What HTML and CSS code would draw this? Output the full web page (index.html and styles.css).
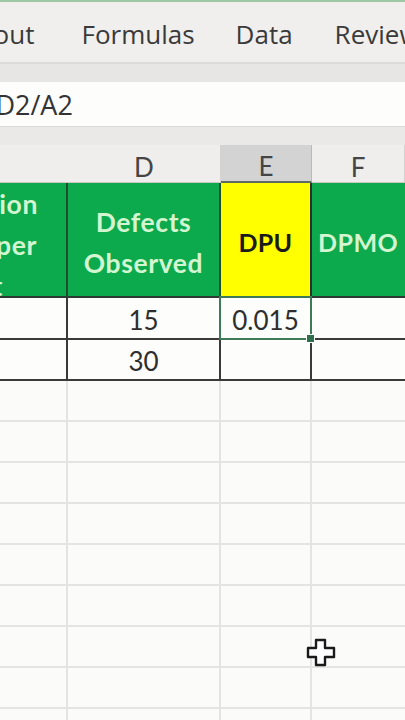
FILE: index.html
```html
<!DOCTYPE html>
<html>
<head>
<meta charset="utf-8">
<link rel="stylesheet" href="styles.css">
</head>
<body>
<div class="app">
  <div class="ribbon">
    <span class="tab tab-cut">Page Layout</span>
    <span class="tab tab-formulas">Formulas</span>
    <span class="tab">Data</span>
    <span class="tab">Review</span>
  </div>
  <div class="band"></div>
  <div class="fbar"><span class="formula">=D2/A2</span></div>
  <div class="band2"></div>
  <div class="sheet">
    <div class="ch ch-c"><span>C</span></div>
    <div class="ch">D</div>
    <div class="ch ch-sel">E</div>
    <div class="ch">F</div>

    <div class="hd hd-c">
      <span class="ln ln1">Inspection</span>
      <span class="ln ln2">Opportunities per</span>
      <span class="ln ln3">Unit</span>
    </div>
    <div class="hd"><span>Defects<br>Observed</span></div>
    <div class="hd hd-yellow">DPU</div>
    <div class="hd hd-f">DPMO</div>

    <div class="dc dc-c"></div>
    <div class="dc">15</div>
    <div class="dc dc-sel">0.015<span class="selbox"></span><span class="handle"></span></div>
    <div class="dc dc-f"></div>

    <div class="dc dc-c"></div>
    <div class="dc">30</div>
    <div class="dc"></div>
    <div class="dc dc-f"></div>

    <div class="ec"></div><div class="ec"></div><div class="ec"></div><div class="ec ec-f"></div>
    <div class="ec"></div><div class="ec"></div><div class="ec"></div><div class="ec ec-f"></div>
    <div class="ec"></div><div class="ec"></div><div class="ec"></div><div class="ec ec-f"></div>
    <div class="ec"></div><div class="ec"></div><div class="ec"></div><div class="ec ec-f"></div>
    <div class="ec"></div><div class="ec"></div><div class="ec"></div><div class="ec ec-f"></div>
    <div class="ec"></div><div class="ec"></div><div class="ec"></div><div class="ec ec-f"></div>
    <div class="ec"></div><div class="ec"></div><div class="ec"></div><div class="ec ec-f"></div>
    <div class="ec"></div><div class="ec"></div><div class="ec"></div><div class="ec ec-f"></div>
    <div class="ec"></div><div class="ec"></div><div class="ec"></div><div class="ec ec-f"></div>
  </div>
  <svg class="cursor" width="32" height="30" viewBox="0 0 32 30">
    <path d="M11 2 H20 V10 H29 V19 H20 V27 H11 V19 H3 V10 H11 Z" fill="#ffffff" stroke="#1a1a1a" stroke-width="2.4" stroke-linejoin="round"/>
  </svg>
</div>
</body>
</html>
```

FILE: styles.css
```css
html, body {
  margin: 0;
  padding: 0;
}
body {
  width: 405px;
  height: 720px;
  overflow: hidden;
  background: #fbfbf9;
  font-family: "Open Sans", "Noto Sans", sans-serif;
}
.app {
  position: relative;
  width: 405px;
  height: 720px;
  overflow: hidden;
}
.ribbon {
  border-top: 2px solid #9cc9a3;
  border-bottom: 2px solid #dcdad8;
  background: #f1efed;
  display: flex;
  align-items: center;
  white-space: nowrap;
  color: #3a3a3a;
  font-size: 26px;
  padding-top: 3px;
  box-sizing: content-box;
  height: 57px;
}
.tab {
  display: inline-block;
  margin-right: 42px;
  flex: none;
}
.tab-cut {
  margin-left: -113px;
  margin-right: 47px;
}
.tab-formulas {
  margin-right: 41px;
}
.band {
  height: 18px;
  background: #e8e6e4;
}
.fbar {
  height: 45px;
  background: #fdfdfc;
  border-bottom: 1px solid #dcdad8;
  display: flex;
  align-items: center;
  color: #333;
  font-size: 27px;
  white-space: nowrap;
  overflow: hidden;
  padding-top: 1px;
  box-sizing: border-box;
}
.formula {
  margin-left: -20px;
}
.band2 {
  height: 18px;
  background: #ebe9e7;
}
.sheet {
  display: grid;
  grid-template-columns: 68px 153px 91px 93px;
  grid-template-rows: 38px 115px 42px 41px repeat(9, 41px);
  font-family: Lato, "Open Sans", sans-serif;
}
.sheet > div {
  box-sizing: border-box;
}
.ch {
  background: #efeeec;
  border-right: 1px solid #d3d2d0;
  border-bottom: 1px solid #c9c8c6;
  display: flex;
  align-items: center;
  justify-content: center;
  font-size: 26px;
  color: #454545;
  padding-top: 6px;
}
.ch-c {
  justify-content: flex-end;
  overflow: hidden;
  padding-right: 120px;
}
.ch-sel {
  background: #d3d3d3;
  border-bottom: 2px solid #5e6b62;
  border-right-color: #b9b9b9;
}
.hd {
  background: #0ca94d;
  border-right: 2px solid #1f4e2f;
  border-bottom: 2px solid #2f3a32;
  display: flex;
  align-items: center;
  justify-content: center;
  text-align: center;
  font-weight: 700;
  font-size: 26.5px;
  line-height: 41px;
  color: #d3f6d1;
  letter-spacing: 0.6px;
  padding-top: 6px;
}
.hd-c {
  flex-direction: column;
  align-items: stretch;
  justify-content: flex-start;
  overflow: hidden;
  padding-top: 1px;
}
.ln {
  display: flex;
  justify-content: flex-end;
  white-space: nowrap;
  height: 41px;
  flex: none;
}
.ln1 { padding-right: 28px; }
.ln2 { padding-right: 29px; }
.ln3 { padding-right: 63px; }
.hd-yellow {
  background: #ffff00;
  color: #1b1b1b;
  border-right-color: #2e2e2e;
  font-size: 25px;
  letter-spacing: 0.3px;
}
.hd-f {
  border-right: none;
  justify-content: flex-start;
  padding-left: 6px;
  font-size: 25px;
  letter-spacing: 0.5px;
}
.dc {
  background: #fdfdfc;
  border-right: 2px solid #3a3a3a;
  border-bottom: 2px solid #3a3a3a;
  display: flex;
  align-items: center;
  justify-content: center;
  font-size: 26px;
  color: #2e2e2e;
  padding-top: 3px;
}
.dc-f {
  border-right: none;
}
.dc-sel {
  position: relative;
}
.selbox {
  position: absolute;
  left: -2px;
  top: -2px;
  right: -2px;
  bottom: -2px;
  border: 2px solid #3d7a57;
}
.handle {
  position: absolute;
  right: -5px;
  bottom: -5px;
  width: 7px;
  height: 7px;
  background: #2f6f4c;
  border: 1px solid #fdfdfc;
}
.ec {
  border-right: 2px solid #e4e4e2;
  border-bottom: 2px solid #e4e4e2;
}
.ec-f {
  border-right: none;
}
.cursor {
  position: absolute;
  left: 305px;
  top: 638px;
}
```
